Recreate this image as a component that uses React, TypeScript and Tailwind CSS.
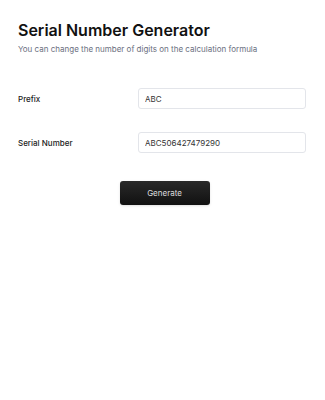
import { useState } from "react";

export default function App() {
  const [prefix, setPrefix] = useState("ABC");
  const [serial, setSerial] = useState("ABC506427479290");

  const generate = () => {
    let digits = "";
    for (let i = 0; i < 12; i++) digits += Math.floor(Math.random() * 10);
    setSerial(prefix + digits);
  };

  return (
    <div className="w-[325px] h-[400px] bg-white font-['Inter',sans-serif] text-[#111]">
      <div className="px-[18px] pt-[20px]">
        <h1 className="text-[16px] leading-[21px] font-semibold text-[#111]">
          Serial Number Generator
        </h1>
        <p className="mt-[2px] text-[8px] leading-[12px] text-[#6b6f80]">
          You can change the number of digits on the calculation formula
        </p>
      </div>

      <div className="mt-[33px] pl-[18px] pr-[19px] flex flex-col gap-[23px]">
        <div className="flex items-center">
          <label className="w-[120px] text-[8px] font-medium text-[#222]">Prefix</label>
          <input
            value={prefix}
            onChange={(e) => setPrefix(e.target.value)}
            className="flex-1 h-[21px] px-[6px] text-[8px] text-[#333] border border-[#e3e5ea] rounded-[3px] outline-none"
          />
        </div>
        <div className="flex items-center">
          <label className="w-[120px] text-[8px] font-medium text-[#222]">Serial Number</label>
          <input
            value={serial}
            readOnly
            className="flex-1 h-[21px] px-[6px] text-[8px] text-[#333] border border-[#e3e5ea] rounded-[3px] outline-none"
          />
        </div>
      </div>

      <div className="mt-[28px] flex justify-center pl-[4px]">
        <button
          onClick={generate}
          className="w-[90px] h-[24px] rounded-[3px] bg-gradient-to-b from-[#2a2a2a] to-[#111] text-[8px] text-[#ddd] shadow-sm"
        >
          Generate
        </button>
      </div>
    </div>
  );
}
